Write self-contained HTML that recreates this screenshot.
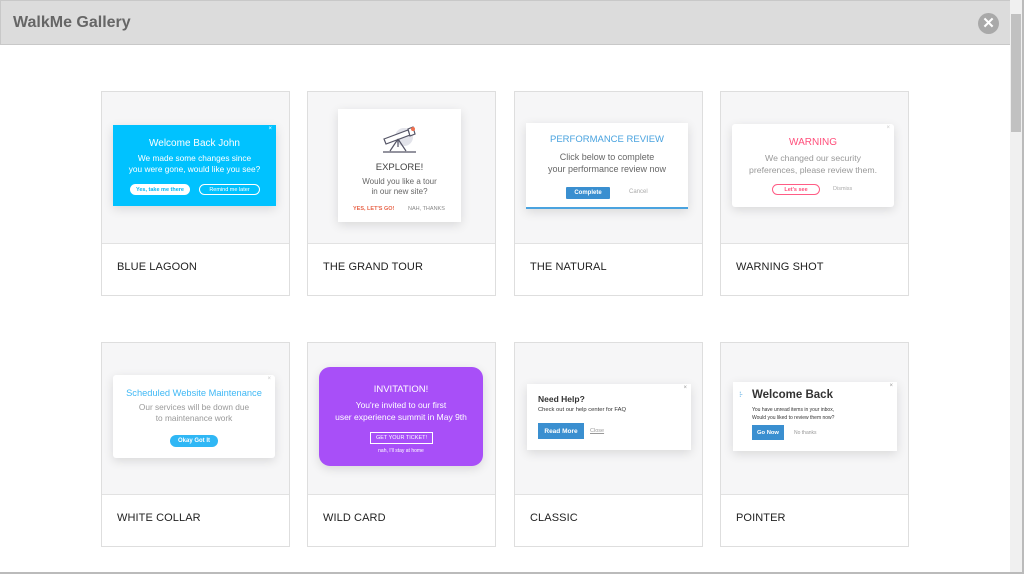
<!DOCTYPE html>
<html><head><meta charset="utf-8"><style>
*{margin:0;padding:0;box-sizing:border-box}
body{width:1024px;height:574px;overflow:hidden;background:#fff;font-family:"Liberation Sans",sans-serif;position:relative}
.hdr{position:absolute;left:0;top:0;width:1010px;height:45px;background:#dcdcdc;border-bottom:1px solid #c8c8c8;border-top:1px solid #c8c8c8;border-left:1px solid #c8c8c8}
.hdr h1{position:absolute;left:12px;top:13px;font-size:16px;font-weight:bold;color:#666}
.cls{position:absolute;left:977px;top:12px;width:21px;height:21px;border-radius:50%;background:#a9a9a9;color:#fff;font-size:15px;font-weight:bold;text-align:center;line-height:21px}
.sb{position:absolute;left:1010px;top:0;width:12px;height:574px;background:#f0f0f0}
.thumb{position:absolute;left:1011px;top:14px;width:10px;height:118px;background:#c1c1c1}
.edge{position:absolute;left:1022px;top:0;width:2px;height:574px;background:#bbb}
.bot{position:absolute;left:0;top:572px;width:1022px;height:2px;background:#bbb}
.card{position:absolute;width:189px;height:205px;border:1px solid #dedede;background:#fff}
.card .pv{position:absolute;left:0;top:0;width:187px;height:152px;background:#f6f6f7;border-bottom:1px solid #e2e2e2}
.card .lb{position:absolute;left:15px;top:169px;font-size:11px;color:#222;letter-spacing:.1px}
.a{position:absolute}
.c{text-align:center}
.sh{box-shadow:0 3px 10px rgba(0,0,0,.12)}
.ob{display:flex;align-items:center;justify-content:center}
</style></head><body>
<div class="hdr"><h1>WalkMe Gallery</h1><div class="cls">✕</div></div>
<div class="sb"></div><div class="thumb"></div><div class="edge"></div><div class="bot"></div>

<div class="card" style="left:101px;top:91px"><div class="pv"></div><div class="lb">BLUE LAGOON</div></div>
<div class="card" style="left:307px;top:91px"><div class="pv"></div><div class="lb">THE GRAND TOUR</div></div>
<div class="card" style="left:514px;top:91px"><div class="pv"></div><div class="lb">THE NATURAL</div></div>
<div class="card" style="left:720px;top:91px"><div class="pv"></div><div class="lb">WARNING SHOT</div></div>
<div class="card" style="left:101px;top:342px"><div class="pv"></div><div class="lb">WHITE COLLAR</div></div>
<div class="card" style="left:307px;top:342px"><div class="pv"></div><div class="lb">WILD CARD</div></div>
<div class="card" style="left:514px;top:342px"><div class="pv"></div><div class="lb">CLASSIC</div></div>
<div class="card" style="left:720px;top:342px"><div class="pv"></div><div class="lb">POINTER</div></div>

<!-- Blue lagoon -->
<div class="a sh" style="left:113px;top:125px;width:163px;height:81px;background:#00c2ff;color:#fff">
 <div class="a" style="right:4px;top:1px;font-size:6px">×</div>
 <div class="a c" style="left:0;width:163px;top:13px;font-size:10px">Welcome Back John</div>
 <div class="a c" style="left:0;width:163px;top:28px;font-size:8.3px;line-height:11px">We made some changes since<br>you were gone, would like you see?</div>
 <div class="a ob" style="left:17px;top:59px;width:60px;height:11px;background:#fff;border-radius:6px;color:#00b8f5;font-size:5.5px;font-weight:bold">Yes, take me there</div>
 <div class="a ob" style="left:86px;top:59px;width:61px;height:11px;border:1px solid #fff;border-radius:6px;font-size:5.5px">Remind me later</div>
</div>
<!-- Grand tour -->
<div class="a sh" style="left:338px;top:109px;width:123px;height:113px;background:#fff">
 <svg class="a" style="left:40px;top:12px" width="46" height="36" viewBox="0 0 46 36">
  <circle cx="26" cy="16" r="9" fill="#e2e3ea"/>
  <g stroke="#556" stroke-width="1.2" fill="#fff">
   <path d="M6 18 L30 9 L32 14 L8 23 Z"/>
   <path d="M30 8 L35 6 L37 13 L32 15 Z" fill="#fff"/>
   <path d="M20 18 L12 30 M20 18 L28 30 M20 18 L20 26"/>
   <path d="M5 31 H38"/>
  </g>
  <circle cx="35" cy="8" r="2" fill="#f07050"/>
 </svg>
 <div class="a c" style="left:0;width:123px;top:53px;font-size:9.5px;color:#444">EXPLORE!</div>
 <div class="a c" style="left:0;width:123px;top:68px;font-size:8px;line-height:10px;color:#666">Would you like a tour<br>in our new site?</div>
 <div class="a" style="left:15px;top:97px;font-size:5.5px;color:#e8654a;font-weight:bold">YES, LET'S GO!</div>
 <div class="a" style="left:70px;top:97px;font-size:5.5px;color:#888">NAH, THANKS</div>
</div>
<!-- Natural -->
<div class="a sh" style="left:526px;top:123px;width:162px;height:86px;background:#fff;border-bottom:2px solid #4aa3df">
 <div class="a c" style="left:0;width:162px;top:11px;font-size:9.5px;color:#4aa3df">PERFORMANCE REVIEW</div>
 <div class="a c" style="left:0;width:162px;top:28px;font-size:9px;line-height:12px;color:#666">Click below to complete<br>your performance review now</div>
 <div class="a ob" style="left:40px;top:64px;width:44px;height:12px;background:#3a8fd0;color:#fff;font-size:6px;font-weight:bold;border-radius:1px">Complete</div>
 <div class="a" style="left:103px;top:66px;font-size:6px;color:#aaa">Cancel</div>
</div>
<!-- Warning -->
<div class="a sh" style="left:732px;top:124px;width:162px;height:83px;background:#fff;border-radius:3px">
 <div class="a" style="right:4px;top:1px;font-size:6px;color:#ccc">×</div>
 <div class="a c" style="left:0;width:162px;top:13px;font-size:10px;color:#ff4f7b">WARNING</div>
 <div class="a c" style="left:0;width:162px;top:28px;font-size:8.7px;line-height:12px;color:#999">We changed our security<br>preferences, please review them.</div>
 <div class="a ob" style="left:40px;top:60px;width:48px;height:11px;border:1px solid #ff5c85;border-radius:6px;font-size:5.5px;font-weight:bold;color:#ff4f7b">Let's see</div>
 <div class="a" style="left:101px;top:62px;font-size:5.5px;color:#aaa">Dismiss</div>
</div>
<!-- White collar -->
<div class="a sh" style="left:113px;top:375px;width:162px;height:83px;background:#fff;border-radius:3px">
 <div class="a" style="right:4px;top:1px;font-size:6px;color:#ccc">×</div>
 <div class="a c" style="left:0;width:162px;top:13px;font-size:9.3px;color:#3fb8f5">Scheduled Website Maintenance</div>
 <div class="a c" style="left:0;width:162px;top:27px;font-size:8.3px;line-height:10.5px;color:#999">Our services will be down due<br>to maintenance work</div>
 <div class="a ob" style="left:57px;top:60px;width:48px;height:12px;background:#2fb7f5;border-radius:6px;color:#fff;font-size:6px;font-weight:bold">Okay Got It</div>
</div>
<!-- Wild card -->
<div class="a sh" style="left:319px;top:367px;width:164px;height:99px;background:#a84ff8;border-radius:11px;color:#fff">
 <div class="a c" style="left:0;width:164px;top:17px;font-size:9.5px">INVITATION!</div>
 <div class="a c" style="left:0;width:164px;top:32px;font-size:8.5px;line-height:12px">You're invited to our first<br>user experience summit in May 9th</div>
 <div class="a ob" style="left:51px;top:65px;width:63px;height:12px;border:1px solid #fff;font-size:5.5px">GET YOUR TICKET!</div>
 <div class="a c" style="left:0;width:164px;top:81px;font-size:5px">nah, I'll stay at home</div>
</div>
<!-- Classic -->
<div class="a sh" style="left:527px;top:384px;width:164px;height:66px;background:#fff">
 <div class="a" style="right:4px;top:1px;font-size:6px;color:#999">×</div>
 <div class="a" style="left:11px;top:10px;font-size:8.5px;font-weight:bold;color:#333">Need Help?</div>
 <div class="a" style="left:11px;top:23px;font-size:5.8px;color:#333">Check out our help center for FAQ</div>
 <div class="a ob" style="left:11px;top:39px;width:46px;height:16px;background:#3a8fd0;color:#fff;font-size:6.5px;font-weight:bold">Read More</div>
 <div class="a" style="left:63px;top:44px;font-size:5.5px;color:#999;text-decoration:underline">Close</div>
</div>
<!-- Pointer -->
<div class="a sh" style="left:733px;top:382px;width:164px;height:69px;background:#fff">
 <div class="a" style="right:4px;top:1px;font-size:6px;color:#999">×</div>
 <div class="a" style="left:6px;top:8px;font-size:8px;color:#4aa3df;letter-spacing:-1px">⁝·</div>
 <div class="a" style="left:19px;top:7px;font-size:11.5px;font-weight:bold;color:#333">Welcome Back</div>
 <div class="a" style="left:19px;top:24px;font-size:5px;line-height:8px;color:#333">You have unread items in your inbox,<br>Would you liked to review them now?</div>
 <div class="a ob" style="left:19px;top:43px;width:32px;height:15px;background:#3a8fd0;color:#fff;font-size:5.8px;font-weight:bold">Go Now</div>
 <div class="a" style="left:61px;top:48px;font-size:5px;color:#999">No thanks</div>
</div>
</body></html>
